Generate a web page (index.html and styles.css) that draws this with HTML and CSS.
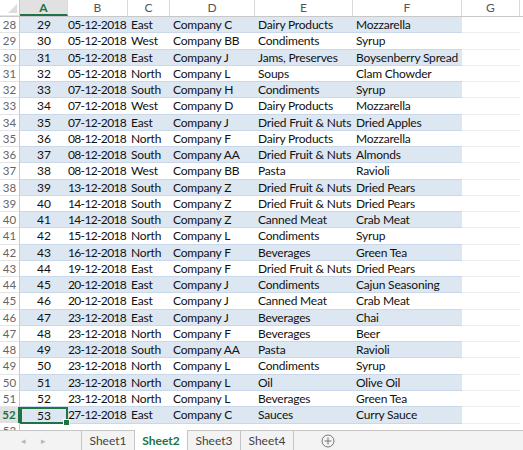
FILE: index.html
```html
<!DOCTYPE html>
<html>
<head>
<meta charset="utf-8">
<link rel="stylesheet" href="styles.css">
</head>
<body>
<div class="sheet">
  <div class="grid">
    <div class="row head">
      <div class="rh corner"><span class="tri"></span></div>
      <div class="ch sel">A</div><div class="ch">B</div><div class="ch">C</div><div class="ch">D</div><div class="ch">E</div><div class="ch">F</div><div class="ch">G</div>
    </div>
    <div class="row band"><div class="rh">28</div><div class="c num">29</div><div class="c date">05-12-2018</div><div class="c">East</div><div class="c">Company C</div><div class="c">Dairy Products</div><div class="c">Mozzarella</div><div class="g"></div></div>
    <div class="row"><div class="rh">29</div><div class="c num">30</div><div class="c date">05-12-2018</div><div class="c">West</div><div class="c">Company BB</div><div class="c">Condiments</div><div class="c">Syrup</div><div class="g"></div></div>
    <div class="row band"><div class="rh">30</div><div class="c num">31</div><div class="c date">05-12-2018</div><div class="c">East</div><div class="c">Company J</div><div class="c">Jams, Preserves</div><div class="c">Boysenberry Spread</div><div class="g"></div></div>
    <div class="row"><div class="rh">31</div><div class="c num">32</div><div class="c date">05-12-2018</div><div class="c">North</div><div class="c">Company L</div><div class="c">Soups</div><div class="c">Clam Chowder</div><div class="g"></div></div>
    <div class="row band"><div class="rh">32</div><div class="c num">33</div><div class="c date">07-12-2018</div><div class="c">South</div><div class="c">Company H</div><div class="c">Condiments</div><div class="c">Syrup</div><div class="g"></div></div>
    <div class="row"><div class="rh">33</div><div class="c num">34</div><div class="c date">07-12-2018</div><div class="c">West</div><div class="c">Company D</div><div class="c">Dairy Products</div><div class="c">Mozzarella</div><div class="g"></div></div>
    <div class="row band"><div class="rh">34</div><div class="c num">35</div><div class="c date">07-12-2018</div><div class="c">East</div><div class="c">Company J</div><div class="c">Dried Fruit &amp; Nuts</div><div class="c">Dried Apples</div><div class="g"></div></div>
    <div class="row"><div class="rh">35</div><div class="c num">36</div><div class="c date">08-12-2018</div><div class="c">North</div><div class="c">Company F</div><div class="c">Dairy Products</div><div class="c">Mozzarella</div><div class="g"></div></div>
    <div class="row band"><div class="rh">36</div><div class="c num">37</div><div class="c date">08-12-2018</div><div class="c">South</div><div class="c">Company AA</div><div class="c">Dried Fruit &amp; Nuts</div><div class="c">Almonds</div><div class="g"></div></div>
    <div class="row"><div class="rh">37</div><div class="c num">38</div><div class="c date">08-12-2018</div><div class="c">West</div><div class="c">Company BB</div><div class="c">Pasta</div><div class="c">Ravioli</div><div class="g"></div></div>
    <div class="row band"><div class="rh">38</div><div class="c num">39</div><div class="c date">13-12-2018</div><div class="c">South</div><div class="c">Company Z</div><div class="c">Dried Fruit &amp; Nuts</div><div class="c">Dried Pears</div><div class="g"></div></div>
    <div class="row"><div class="rh">39</div><div class="c num">40</div><div class="c date">14-12-2018</div><div class="c">South</div><div class="c">Company Z</div><div class="c">Dried Fruit &amp; Nuts</div><div class="c">Dried Pears</div><div class="g"></div></div>
    <div class="row band"><div class="rh">40</div><div class="c num">41</div><div class="c date">14-12-2018</div><div class="c">South</div><div class="c">Company Z</div><div class="c">Canned Meat</div><div class="c">Crab Meat</div><div class="g"></div></div>
    <div class="row"><div class="rh">41</div><div class="c num">42</div><div class="c date">15-12-2018</div><div class="c">North</div><div class="c">Company L</div><div class="c">Condiments</div><div class="c">Syrup</div><div class="g"></div></div>
    <div class="row band"><div class="rh">42</div><div class="c num">43</div><div class="c date">16-12-2018</div><div class="c">North</div><div class="c">Company F</div><div class="c">Beverages</div><div class="c">Green Tea</div><div class="g"></div></div>
    <div class="row"><div class="rh">43</div><div class="c num">44</div><div class="c date">19-12-2018</div><div class="c">East</div><div class="c">Company F</div><div class="c">Dried Fruit &amp; Nuts</div><div class="c">Dried Pears</div><div class="g"></div></div>
    <div class="row band"><div class="rh">44</div><div class="c num">45</div><div class="c date">20-12-2018</div><div class="c">East</div><div class="c">Company J</div><div class="c">Condiments</div><div class="c">Cajun Seasoning</div><div class="g"></div></div>
    <div class="row"><div class="rh">45</div><div class="c num">46</div><div class="c date">20-12-2018</div><div class="c">East</div><div class="c">Company J</div><div class="c">Canned Meat</div><div class="c">Crab Meat</div><div class="g"></div></div>
    <div class="row band"><div class="rh">46</div><div class="c num">47</div><div class="c date">23-12-2018</div><div class="c">East</div><div class="c">Company J</div><div class="c">Beverages</div><div class="c">Chai</div><div class="g"></div></div>
    <div class="row"><div class="rh">47</div><div class="c num">48</div><div class="c date">23-12-2018</div><div class="c">North</div><div class="c">Company F</div><div class="c">Beverages</div><div class="c">Beer</div><div class="g"></div></div>
    <div class="row band"><div class="rh">48</div><div class="c num">49</div><div class="c date">23-12-2018</div><div class="c">South</div><div class="c">Company AA</div><div class="c">Pasta</div><div class="c">Ravioli</div><div class="g"></div></div>
    <div class="row"><div class="rh">49</div><div class="c num">50</div><div class="c date">23-12-2018</div><div class="c">North</div><div class="c">Company L</div><div class="c">Condiments</div><div class="c">Syrup</div><div class="g"></div></div>
    <div class="row band"><div class="rh">50</div><div class="c num">51</div><div class="c date">23-12-2018</div><div class="c">North</div><div class="c">Company L</div><div class="c">Oil</div><div class="c">Olive Oil</div><div class="g"></div></div>
    <div class="row"><div class="rh">51</div><div class="c num">52</div><div class="c date">23-12-2018</div><div class="c">North</div><div class="c">Company L</div><div class="c">Beverages</div><div class="c">Green Tea</div><div class="g"></div></div>
    <div class="row band"><div class="rh selrow">52</div><div class="c num active">53<span class="handle"></span></div><div class="c date">27-12-2018</div><div class="c">East</div><div class="c">Company C</div><div class="c">Sauces</div><div class="c">Curry Sauce</div><div class="g"></div></div>
    <div class="row"><div class="rh">53</div><div class="e"></div><div class="e"></div><div class="e"></div><div class="e"></div><div class="e"></div><div class="e"></div><div class="g"></div></div>
  </div>
  <div class="tabs">
    <div class="nav"><span class="arrow">&#9666;</span><span class="arrow">&#9656;</span></div>
    <div class="tab">Sheet1</div>
    <div class="tab active">Sheet2</div>
    <div class="tab">Sheet3</div>
    <div class="tab">Sheet4</div>
    <div class="add">
      <svg width="14" height="14" viewBox="0 0 14 14"><circle cx="7" cy="7" r="6" fill="none" stroke="#777" stroke-width="1"/><path d="M7 3.5V10.5M3.5 7H10.5" stroke="#777" stroke-width="1"/></svg>
    </div>
  </div>
</div>
</body>
</html>
```

FILE: styles.css
```css
html, body {
  margin: 0;
  padding: 0;
  background: #fff;
}
.sheet {
  width: 523px;
  height: 450px;
  overflow: hidden;
  display: flex;
  flex-direction: column;
  font-family: Lato, "Open Sans", sans-serif;
  font-size: 12px;
  color: #111;
}
.grid {
  flex: 1;
  overflow: hidden;
}
.row {
  display: grid;
  grid-template-columns: 20px 48px 60px 42px 85px 98px 109px 58px;
  height: 16.25px;
}
.row > div {
  line-height: 16px;
  white-space: nowrap;
  overflow: hidden;
  box-sizing: border-box;
}
.head {
  height: 17px;
  border-bottom: 1px solid #c8c8c8;
  box-sizing: border-box;
}
.ch {
  text-align: center;
  color: #555;
  font-size: 12px;
  border-right: 1px solid #dadada;
  background: #fff;
}
.ch.sel {
  background: #e1e1e1;
  color: #217346;
  font-weight: bold;
  border-bottom: 2px solid #217346;
  line-height: 16px;
}
.corner {
  position: relative;
  background: #fff;
  border-right: 1px solid #dadada;
}
.tri {
  position: absolute;
  right: 2px;
  bottom: 2px;
  width: 0;
  height: 0;
  border-left: 9px solid transparent;
  border-bottom: 9px solid #dcdcdc;
}
.rh {
  text-align: center;
  color: #666;
  font-size: 11.5px;
  border-right: 1px solid #c8c8c8;
  border-bottom: 1px solid #e4e4e4;
  background: #fff;
}
.rh.selrow {
  background: #e1e1e1;
  color: #217346;
  font-weight: bold;
  border-right: 2px solid #217346;
}
.c {
  padding-left: 3px;
  letter-spacing: -0.2px;
  border-bottom: 1px solid #c9d8ea;
}
.band .c {
  background: #dde7f2;
}
.c.num {
  text-align: center;
  padding-left: 0;
  letter-spacing: 0;
}
.c.date {
  text-align: right;
  padding-left: 0;
  padding-right: 2px;
  letter-spacing: -0.65px;
}
.c.active {
  position: relative;
  overflow: visible;
  border: 2px solid #217346;
  line-height: 13px;
}
.handle {
  position: absolute;
  right: -4px;
  bottom: -4px;
  width: 5px;
  height: 5px;
  background: #217346;
  border: 1px solid #fff;
}
.e {
  border-bottom: 1px solid #e4e4e4;
}
.g {
  border-bottom: 1px solid #eeeeee;
}
.tabs {
  height: 19px;
  flex: none;
  display: flex;
  align-items: stretch;
  border-top: 1px solid #c6c6c6;
  background: #f3f3f3;
  font-size: 12px;
  color: #444;
}
.nav {
  width: 82px;
  display: flex;
  align-items: center;
  padding-left: 21px;
  gap: 15px;
  box-sizing: border-box;
  border-right: 1px solid #c6c6c6;
}
.arrow {
  color: #b8b8b8;
  font-size: 9px;
}
.tab {
  width: 52px;
  display: flex;
  align-items: center;
  justify-content: center;
  border-right: 1px solid #c6c6c6;
}
.tab.active {
  background: #fff;
  color: #217346;
  font-weight: bold;
  margin-top: -1px;
}
.add {
  display: flex;
  align-items: center;
  padding-left: 27px;
}
```
